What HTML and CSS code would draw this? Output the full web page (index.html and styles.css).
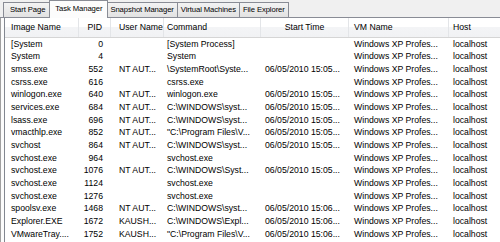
FILE: index.html
```html
<!DOCTYPE html>
<html>
<head>
<meta charset="utf-8">
<link rel="stylesheet" href="styles.css">
</head>
<body>
<div class="app">
  <div class="tabs">
    <div class="tab">Start Page</div>
    <div class="tab active">Task Manager</div>
    <div class="tab">Snapshot Manager</div>
    <div class="tab">Virtual Machines</div>
    <div class="tab">File Explorer</div>
  </div>
  <div class="panel">
    <div class="grid">
      <div class="row head">
        <div class="c name">Image Name</div>
        <div class="c pid">PID</div>
        <div class="c user">User Name</div>
        <div class="c cmd">Command</div>
        <div class="c time center">Start Time</div>
        <div class="c vm">VM Name</div>
        <div class="c host">Host</div>
      </div>
      <div class="row"><div class="c name">[System</div><div class="c pid">0</div><div class="c user"></div><div class="c cmd">[System Process]</div><div class="c time"></div><div class="c vm">Windows XP Profes...</div><div class="c host">localhost</div></div>
      <div class="row"><div class="c name">System</div><div class="c pid">4</div><div class="c user"></div><div class="c cmd">System</div><div class="c time"></div><div class="c vm">Windows XP Profes...</div><div class="c host">localhost</div></div>
      <div class="row"><div class="c name">smss.exe</div><div class="c pid">552</div><div class="c user">NT AUT...</div><div class="c cmd">\SystemRoot\Syste...</div><div class="c time">06/05/2010 15:05...</div><div class="c vm">Windows XP Profes...</div><div class="c host">localhost</div></div>
      <div class="row"><div class="c name">csrss.exe</div><div class="c pid">616</div><div class="c user"></div><div class="c cmd">csrss.exe</div><div class="c time"></div><div class="c vm">Windows XP Profes...</div><div class="c host">localhost</div></div>
      <div class="row"><div class="c name">winlogon.exe</div><div class="c pid">640</div><div class="c user">NT AUT...</div><div class="c cmd">winlogon.exe</div><div class="c time">06/05/2010 15:05...</div><div class="c vm">Windows XP Profes...</div><div class="c host">localhost</div></div>
      <div class="row"><div class="c name">services.exe</div><div class="c pid">684</div><div class="c user">NT AUT...</div><div class="c cmd">C:\WINDOWS\syst...</div><div class="c time">06/05/2010 15:05...</div><div class="c vm">Windows XP Profes...</div><div class="c host">localhost</div></div>
      <div class="row"><div class="c name">lsass.exe</div><div class="c pid">696</div><div class="c user">NT AUT...</div><div class="c cmd">C:\WINDOWS\syst...</div><div class="c time">06/05/2010 15:05...</div><div class="c vm">Windows XP Profes...</div><div class="c host">localhost</div></div>
      <div class="row"><div class="c name">vmacthlp.exe</div><div class="c pid">852</div><div class="c user">NT AUT...</div><div class="c cmd">"C:\Program Files\V...</div><div class="c time">06/05/2010 15:05...</div><div class="c vm">Windows XP Profes...</div><div class="c host">localhost</div></div>
      <div class="row"><div class="c name">svchost</div><div class="c pid">864</div><div class="c user">NT AUT...</div><div class="c cmd">C:\WINDOWS\syst...</div><div class="c time">06/05/2010 15:05...</div><div class="c vm">Windows XP Profes...</div><div class="c host">localhost</div></div>
      <div class="row"><div class="c name">svchost.exe</div><div class="c pid">964</div><div class="c user"></div><div class="c cmd">svchost.exe</div><div class="c time"></div><div class="c vm">Windows XP Profes...</div><div class="c host">localhost</div></div>
      <div class="row"><div class="c name">svchost.exe</div><div class="c pid">1076</div><div class="c user">NT AUT...</div><div class="c cmd">C:\WINDOWS\Syst...</div><div class="c time">06/05/2010 15:05...</div><div class="c vm">Windows XP Profes...</div><div class="c host">localhost</div></div>
      <div class="row"><div class="c name">svchost.exe</div><div class="c pid">1124</div><div class="c user"></div><div class="c cmd">svchost.exe</div><div class="c time"></div><div class="c vm">Windows XP Profes...</div><div class="c host">localhost</div></div>
      <div class="row"><div class="c name">svchost.exe</div><div class="c pid">1276</div><div class="c user"></div><div class="c cmd">svchost.exe</div><div class="c time"></div><div class="c vm">Windows XP Profes...</div><div class="c host">localhost</div></div>
      <div class="row"><div class="c name">spoolsv.exe</div><div class="c pid">1468</div><div class="c user">NT AUT...</div><div class="c cmd">C:\WINDOWS\syst...</div><div class="c time">06/05/2010 15:06...</div><div class="c vm">Windows XP Profes...</div><div class="c host">localhost</div></div>
      <div class="row"><div class="c name">Explorer.EXE</div><div class="c pid">1672</div><div class="c user">KAUSH...</div><div class="c cmd">C:\WINDOWS\Expl...</div><div class="c time">06/05/2010 15:06...</div><div class="c vm">Windows XP Profes...</div><div class="c host">localhost</div></div>
      <div class="row"><div class="c name">VMwareTray....</div><div class="c pid">1752</div><div class="c user">KAUSH...</div><div class="c cmd">"C:\Program Files\V...</div><div class="c time">06/05/2010 15:06...</div><div class="c vm">Windows XP Profes...</div><div class="c host">localhost</div></div>
    </div>
  </div>
</div>
</body>
</html>
```
FILE: styles.css
```css
html, body {
  margin: 0;
  padding: 0;
  background: #f0f0f0;
}
body {
  width: 500px;
  height: 242px;
  overflow: hidden;
  font-family: "Liberation Sans", Arial, sans-serif;
  font-size: 8.7px;
  color: #000;
}
.app {
  display: flex;
  flex-direction: column;
  height: 242px;
}
.tabs {
  display: flex;
  align-items: flex-end;
  height: 18px;
  padding-left: 3px;
  border-bottom: 1px solid #898c95;
  box-sizing: border-box;
}
.tab {
  height: 15px;
  line-height: 14px;
  padding: 0 3px;
  border: 1px solid #898c95;
  border-bottom: none;
  border-right: none;
  background: linear-gradient(#f3f3f3, #e2e2e2);
  color: #000;
  font-family: "Liberation Sans", Arial, sans-serif;
  font-size: 7.7px;
  letter-spacing: -0.1px;
  box-sizing: border-box;
}
.tab:first-child {
  padding: 0 6px 0 6px;
}
.tab:last-child {
  border-right: 1px solid #898c95;
}
.tab.active {
  height: 18px;
  line-height: 15px;
  background: #fcfcfc;
  padding: 0 5px;
  margin: 0 -2px -1px -2px;
  border-right: 1px solid #898c95;
  position: relative;
  z-index: 1;
}
.tab.active + .tab {
  border-left: none;
  padding-left: 4px;
}
.panel {
  flex: 1;
  display: flex;
  padding: 0 0 0 1px;
  border-left: 1px solid #a0a0a0;
  background: #fcfcfc;
}
.grid {
  flex: 1;
  margin-left: 2px;
  border-left: 1px solid #828790;
  background: #fff;
  overflow: hidden;
}
.row {
  display: grid;
  grid-template-columns: 74px 32px 53px 97px 88px 100px 60px;
  height: 12.68px;
  line-height: 12.68px;
  white-space: nowrap;
}
.row.head {
  height: 19.5px;
  line-height: 19px;
  background: linear-gradient(#ffffff 0%, #ffffff 45%, #f3f4f6 50%, #f1f2f4 100%);
  border-bottom: 1px solid #d5d5d5;
  box-sizing: border-box;
}
.row.head .c {
  border-right: 1px solid #e3e5e8;
  color: #000;
}
.c {
  overflow: hidden;
  text-overflow: ellipsis;
  padding-left: 6px;
  box-sizing: border-box;
}
.c.pid {
  text-align: right;
  padding-left: 0;
  padding-right: 8px;
}
.c.user { padding-left: 8px; }
.c.cmd { padding-left: 3px; }
.c.time { padding-left: 4px; }
.c.center { text-align: center; padding-left: 0; }
.c.vm { padding-left: 5px; }
.c.host { padding-left: 4px; }
```
